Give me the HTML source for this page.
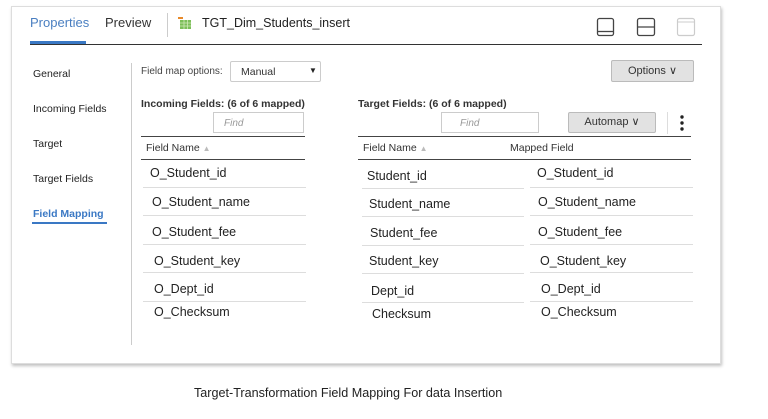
<!DOCTYPE html>
<html><head><style>
*{margin:0;padding:0;box-sizing:border-box}
body{width:768px;height:419px;background:#fff;position:relative;overflow:hidden;font-family:"Liberation Sans",sans-serif;color:#222}
.a{position:absolute;white-space:nowrap}
.panel{position:absolute;left:11px;top:6px;width:710px;height:358px;border:1px solid #ddd;box-shadow:1px 2px 3px rgba(0,0,0,.25);background:#fff}
.nav{font-size:10.5px;color:#222}
.hl{position:absolute;height:1px;background:#ddd}
.row{font-size:12.5px;color:#222}
.btn{position:absolute;background:#e2e2e2;border:1px solid #bbb;border-radius:2px;font-size:11px;text-align:center;color:#333}
.inp{position:absolute;border:1px solid #ccc;background:#fff;font-size:10px;font-style:italic;color:#999}
</style></head><body>
<div class="panel"></div>
<div class="a" style="left:30px;top:15px;font-size:13px;color:#4a7fc1">Properties</div>
<div class="a" style="left:105px;top:15px;font-size:13px;color:#333">Preview</div>
<div class="a" style="left:30px;top:41px;width:56px;height:3px;background:#3a78c4"></div>
<div class="a" style="left:30px;top:44px;width:672px;height:1px;background:#333"></div>
<div class="a" style="left:167px;top:13px;width:1px;height:24px;background:#ccc"></div>
<svg class="a" style="left:178px;top:16px" width="14" height="13"><rect x="2" y="4" width="11" height="9" fill="#7cbf5a"/><path d="M2 7h11M2 10h11M6 4v9M9.5 4v9" stroke="#cfe8b8" stroke-width=".8"/><path d="M0 2h5" stroke="#e88a2a" stroke-width="2"/></svg>
<div class="a" style="left:202px;top:16px;font-size:12.5px;color:#222">TGT_Dim_Students_insert</div>
<svg class="a" style="left:596px;top:17px" width="100" height="20"><rect x="1.5" y="1.5" width="16" height="17" rx="2" fill="none" stroke="#444" stroke-width="1.3"/><path d="M1.5 14.5h16" stroke="#444" stroke-width="1.3"/><rect x="41.5" y="1.5" width="17" height="17" rx="2" fill="none" stroke="#444" stroke-width="1.3"/><path d="M41.5 10h17" stroke="#444" stroke-width="1.3"/><rect x="81.5" y="1.5" width="17" height="17" rx="2" fill="none" stroke="#ccc" stroke-width="1.2"/><path d="M81.5 5h17" stroke="#ccc"/></svg>

<div class="a nav" style="left:33px;top:68px">General</div>
<div class="a nav" style="left:33px;top:103px">Incoming Fields</div>
<div class="a nav" style="left:33px;top:138px">Target</div>
<div class="a nav" style="left:33px;top:173px">Target Fields</div>
<div class="a nav" style="left:33px;top:208px;color:#3a78c4;font-weight:bold">Field Mapping</div>
<div class="a" style="left:32px;top:222px;width:75px;height:2px;background:#3a78c4"></div>
<div class="a" style="left:131px;top:63px;width:1px;height:282px;background:#ccc"></div>

<div class="a" style="left:141px;top:66px;font-size:10px;color:#444">Field map options:</div>
<div class="a" style="left:230px;top:61px;width:91px;height:21px;border:1px solid #ccc;border-radius:2px"></div>
<div class="a" style="left:241px;top:66px;font-size:10.5px;color:#333">Manual</div>
<div class="a" style="left:309px;top:66px;font-size:8px;color:#222">▼</div>
<div class="btn" style="left:611px;top:60px;width:83px;height:22px;line-height:20px">Options ∨</div>

<div class="a" style="left:141px;top:98px;font-size:10.5px;font-weight:bold;color:#333">Incoming Fields: (6 of 6 mapped)</div>
<div class="inp" style="left:213px;top:112px;width:91px;height:21px;padding:5px 0 0 10px">Find</div>
<div class="a" style="left:141px;top:136px;width:164px;height:1px;background:#444"></div>
<div class="a" style="left:146px;top:142px;font-size:10.5px;color:#333">Field Name <span style="color:#bbb;font-size:8px">▲</span></div>
<div class="a" style="left:141px;top:159px;width:164px;height:1px;background:#444"></div>

<div class="a" style="left:358px;top:98px;font-size:10.5px;font-weight:bold;color:#333">Target Fields: (6 of 6 mapped)</div>
<div class="inp" style="left:441px;top:112px;width:98px;height:21px;padding:5px 0 0 18px">Find</div>
<div class="btn" style="left:568px;top:112px;width:88px;height:21px;line-height:19px">Automap ∨</div>
<div class="a" style="left:667px;top:112px;width:1px;height:22px;background:#ddd"></div>
<svg class="a" style="left:679px;top:114px" width="6" height="18"><circle cx="3" cy="3" r="1.7" fill="#222"/><circle cx="3" cy="9" r="1.7" fill="#222"/><circle cx="3" cy="15" r="1.7" fill="#222"/></svg>
<div class="a" style="left:358px;top:136px;width:333px;height:1px;background:#444"></div>
<div class="a" style="left:363px;top:142px;font-size:10.5px;color:#333">Field Name <span style="color:#bbb;font-size:8px">▲</span></div>
<div class="a" style="left:510px;top:142px;font-size:10.5px;color:#333">Mapped Field</div>
<div class="a" style="left:358px;top:159px;width:333px;height:1px;background:#444"></div>

<div class="a row" style="left:150px;top:166px">O_Student_id</div>
<div class="a row" style="left:152px;top:195px">O_Student_name</div>
<div class="a row" style="left:152px;top:225px">O_Student_fee</div>
<div class="a row" style="left:154px;top:254px">O_Student_key</div>
<div class="a row" style="left:154px;top:282px">O_Dept_id</div>
<div class="a row" style="left:154px;top:305px">O_Checksum</div>
<div class="hl" style="left:143px;top:187px;width:163px"></div>
<div class="hl" style="left:143px;top:215px;width:163px"></div>
<div class="hl" style="left:143px;top:244px;width:163px"></div>
<div class="hl" style="left:143px;top:272px;width:163px"></div>
<div class="hl" style="left:143px;top:301px;width:163px"></div>

<div class="a row" style="left:367px;top:169px">Student_id</div>
<div class="a row" style="left:369px;top:197px">Student_name</div>
<div class="a row" style="left:370px;top:226px">Student_fee</div>
<div class="a row" style="left:369px;top:254px">Student_key</div>
<div class="a row" style="left:371px;top:284px">Dept_id</div>
<div class="a row" style="left:372px;top:307px">Checksum</div>
<div class="hl" style="left:362px;top:188px;width:162px"></div>
<div class="hl" style="left:362px;top:216px;width:162px"></div>
<div class="hl" style="left:362px;top:245px;width:162px"></div>
<div class="hl" style="left:362px;top:273px;width:162px"></div>
<div class="hl" style="left:362px;top:302px;width:162px"></div>

<div class="a row" style="left:537px;top:166px">O_Student_id</div>
<div class="a row" style="left:538px;top:195px">O_Student_name</div>
<div class="a row" style="left:538px;top:225px">O_Student_fee</div>
<div class="a row" style="left:540px;top:254px">O_Student_key</div>
<div class="a row" style="left:541px;top:282px">O_Dept_id</div>
<div class="a row" style="left:541px;top:305px">O_Checksum</div>
<div class="hl" style="left:530px;top:187px;width:163px"></div>
<div class="hl" style="left:530px;top:215px;width:163px"></div>
<div class="hl" style="left:530px;top:244px;width:163px"></div>
<div class="hl" style="left:530px;top:272px;width:163px"></div>
<div class="hl" style="left:530px;top:301px;width:163px"></div>

<div class="a" style="left:194px;top:386px;font-size:12.6px;color:#222">Target-Transformation Field Mapping For data Insertion</div>
</body></html>
